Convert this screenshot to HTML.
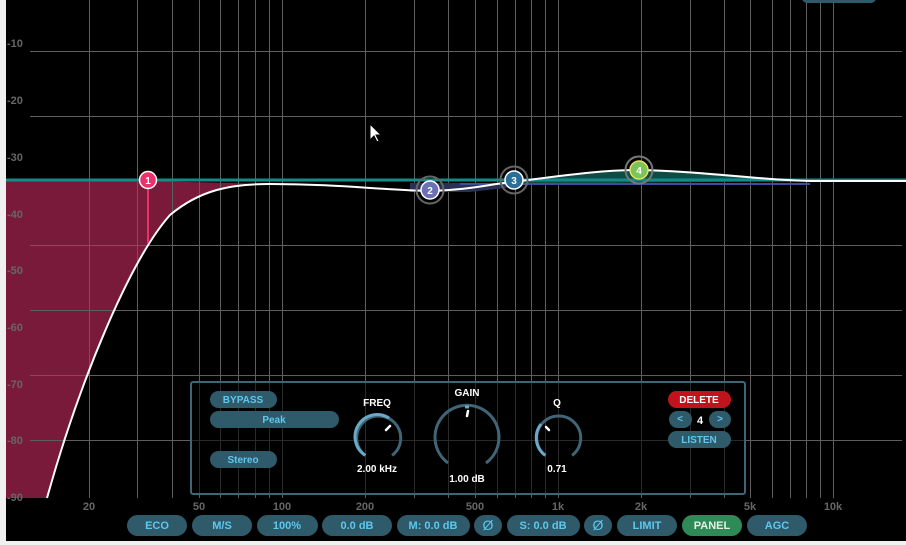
<!DOCTYPE html>
<html><head><style>
body{margin:0;width:906px;height:545px;background:#f0f0f0;overflow:hidden;font-family:"Liberation Sans",sans-serif}
svg{position:absolute;left:0;top:0}
</style></head><body>
<svg width="906" height="545" viewBox="0 0 906 545" font-family="Liberation Sans, sans-serif">
<rect x="6" y="0" width="900" height="541" fill="#000"/>
<path d="M6,181 L148,181 L270,184 C230,184 200,190 170,215 C130,260 80,380 47,498 L6,498 Z" fill="#7a1a3a"/>
<g stroke="#5e5e5e" stroke-width="1">
<line x1="89.5" y1="0" x2="89.5" y2="498"/><line x1="137.5" y1="0" x2="137.5" y2="498"/><line x1="172.5" y1="0" x2="172.5" y2="498"/><line x1="199.5" y1="0" x2="199.5" y2="498"/><line x1="220.5" y1="0" x2="220.5" y2="498"/><line x1="238.5" y1="0" x2="238.5" y2="498"/><line x1="255.5" y1="0" x2="255.5" y2="498"/><line x1="269.5" y1="0" x2="269.5" y2="498"/><line x1="282.5" y1="0" x2="282.5" y2="498"/>
<line x1="365.5" y1="0" x2="365.5" y2="498"/><line x1="414.5" y1="0" x2="414.5" y2="498"/><line x1="448.5" y1="0" x2="448.5" y2="498"/><line x1="475.5" y1="0" x2="475.5" y2="498"/><line x1="497.5" y1="0" x2="497.5" y2="498"/><line x1="515.5" y1="0" x2="515.5" y2="498"/><line x1="531.5" y1="0" x2="531.5" y2="498"/><line x1="545.5" y1="0" x2="545.5" y2="498"/><line x1="558.5" y1="0" x2="558.5" y2="498"/>
<line x1="641.5" y1="0" x2="641.5" y2="498"/><line x1="690.5" y1="0" x2="690.5" y2="498"/><line x1="724.5" y1="0" x2="724.5" y2="498"/><line x1="750.5" y1="0" x2="750.5" y2="498"/><line x1="772.5" y1="0" x2="772.5" y2="498"/><line x1="790.5" y1="0" x2="790.5" y2="498"/><line x1="806.5" y1="0" x2="806.5" y2="498"/><line x1="820.5" y1="0" x2="820.5" y2="498"/><line x1="833.5" y1="0" x2="833.5" y2="498"/>
</g>
<g stroke="#5e5e5e" stroke-width="1">
<line x1="30" y1="51.5" x2="902" y2="51.5"/><line x1="30" y1="116.5" x2="902" y2="116.5"/><line x1="30" y1="245.5" x2="902" y2="245.5"/><line x1="30" y1="310.5" x2="902" y2="310.5"/><line x1="30" y1="375.5" x2="902" y2="375.5"/><line x1="30" y1="440.5" x2="902" y2="440.5"/>
</g>
<g fill="#666" font-size="11" font-weight="bold">
<text x="7" y="47">-10</text><text x="7" y="104">-20</text><text x="7" y="161">-30</text><text x="7" y="218">-40</text><text x="7" y="274">-50</text><text x="7" y="331">-60</text><text x="7" y="388">-70</text><text x="7" y="444">-80</text><text x="7" y="501">-90</text>
</g>
<g fill="#666" font-size="11" font-weight="bold" text-anchor="middle">
<text x="89" y="510">20</text><text x="199" y="510">50</text><text x="282" y="510">100</text><text x="365" y="510">200</text><text x="475" y="510">500</text><text x="558" y="510">1k</text><text x="641" y="510">2k</text><text x="750" y="510">5k</text><text x="833" y="510">10k</text>
</g>
<path d="M410,183 L513,183 L513,187 L470,192 L410,192 Z" fill="#2a2f55"/>
<path d="M513,180 C560,176 600,170 638,169 C700,170 760,178 810,181 L513,184 Z" fill="#0e4c44"/>
<line x1="6" y1="180" x2="906" y2="180" stroke="#148c86" stroke-width="3"/>
<line x1="460" y1="184" x2="810" y2="184" stroke="#3a4f9a" stroke-width="2"/>
<path d="M47,498 C80,380 130,260 170,215 C200,190 230,184 270,184 C340,184 380,190 430,191 C470,190 490,184 513,182 C560,176 600,170 638,170 C700,171 760,180 810,181 L906,181" fill="none" stroke="#fff" stroke-width="2"/>
<line x1="148" y1="188" x2="148" y2="243" stroke="#e8336b" stroke-width="2"/>
<circle cx="430" cy="190" r="13.5" fill="none" stroke="#666" stroke-width="2"/>
<circle cx="430" cy="190" r="9" fill="#6b70b8" stroke="#fff" stroke-width="1.5"/>
<text x="430" y="194" fill="#fff" font-size="10" font-weight="bold" text-anchor="middle">2</text>
<circle cx="514" cy="180" r="13.5" fill="none" stroke="#666" stroke-width="2"/>
<circle cx="514" cy="180" r="9" fill="#2a6f9a" stroke="#fff" stroke-width="1.5"/>
<text x="514" y="184" fill="#fff" font-size="10" font-weight="bold" text-anchor="middle">3</text>
<circle cx="639" cy="170" r="13.5" fill="none" stroke="#777" stroke-width="2"/>
<circle cx="639" cy="170" r="9" fill="#7cc35a" stroke="#e8e060" stroke-width="1.5"/>
<text x="639" y="174" fill="#fff" font-size="10" font-weight="bold" text-anchor="middle">4</text>
<circle cx="148" cy="180" r="8.5" fill="#e8336b" stroke="#fff" stroke-width="1.5"/>
<text x="148" y="184" fill="#fff" font-size="10" font-weight="bold" text-anchor="middle">1</text>
<path d="M370,124 L370,140 L374,136 L377,142 L379,141 L376,135 L381,135 Z" fill="#fff" stroke="#000" stroke-width="1"/>
<rect x="802" y="-8" width="74" height="11" rx="5" fill="#2f5a6a"/>
<rect x="191" y="382" width="554" height="112" rx="2" fill="rgba(0,0,0,0.55)" stroke="#3f6577" stroke-width="2"/>
<g font-size="10" font-weight="bold" text-anchor="middle">
<rect x="210" y="391" width="67" height="17" rx="8.5" fill="#2f5a6a"/><text x="243" y="403" fill="#5bc8f0">BYPASS</text>
<rect x="210" y="411" width="129" height="17" rx="8.5" fill="#2f5a6a"/><text x="274" y="423" fill="#5bc8f0">Peak</text>
<rect x="210" y="451" width="67" height="17" rx="8.5" fill="#2f5a6a"/><text x="243" y="463" fill="#5bc8f0">Stereo</text>
<text x="377" y="406" fill="#fff">FREQ</text><text x="467" y="396" fill="#fff">GAIN</text><text x="557" y="406" fill="#fff">Q</text>
<text x="377" y="472" fill="#fff">2.00 kHz</text><text x="467" y="482" fill="#fff">1.00 dB</text><text x="557" y="472" fill="#fff">0.71</text>
<rect x="668" y="391" width="63" height="17" rx="8.5" fill="#c0141c"/><text x="699" y="403" fill="#fff">DELETE</text>
<rect x="669" y="411" width="23" height="17" rx="8.5" fill="#2f5a6a"/><text x="680" y="422" fill="#5bc8f0">&lt;</text>
<text x="700" y="424" fill="#fff" font-size="11">4</text>
<rect x="709" y="411" width="22" height="17" rx="8.5" fill="#2f5a6a"/><text x="720" y="422" fill="#5bc8f0">&gt;</text>
<rect x="668" y="431" width="63" height="17" rx="8.5" fill="#2f5a6a"/><text x="699" y="443" fill="#5bc8f0">LISTEN</text>
</g>
<g fill="none" stroke-width="3">
<path d="M365.3,455.4 A22,22 0 1 1 392.1,455.4" stroke="#3f6577"/>
<path d="M365.3,455.4 A22,22 0 0 1 389,418" stroke="#6aa8c8"/>
<path d="M448,463 A32,32 0 1 1 486,463" stroke="#3f6577"/>
<path d="M465,407 A32,32 0 0 1 469,407" stroke="#6aa8c8"/>
<path d="M545.3,455.4 A22,22 0 1 1 572.1,455.4" stroke="#3f6577"/>
<path d="M545.3,455.4 A22,22 0 0 1 541,424" stroke="#6aa8c8"/>
</g>
<g stroke="#fff" stroke-width="2.5" stroke-linecap="round">
<line x1="386" y1="430" x2="390" y2="426"/>
<line x1="467" y1="416" x2="468" y2="411"/>
<line x1="546" y1="427" x2="549" y2="430"/>
</g>
<g font-size="11" font-weight="bold" text-anchor="middle" fill="#5bc8f0">
<rect x="127" y="515" width="60" height="21" rx="10.5" fill="#2f5a6a"/><text x="157" y="529">ECO</text>
<rect x="192" y="515" width="60" height="21" rx="10.5" fill="#2f5a6a"/><text x="222" y="529">M/S</text>
<rect x="257" y="515" width="61" height="21" rx="10.5" fill="#2f5a6a"/><text x="287" y="529">100%</text>
<rect x="322" y="515" width="70" height="21" rx="10.5" fill="#2f5a6a"/><text x="357" y="529">0.0 dB</text>
<rect x="397" y="515" width="73" height="21" rx="10.5" fill="#2f5a6a"/><text x="433" y="529">M: 0.0 dB</text>
<rect x="474" y="515" width="28" height="21" rx="10.5" fill="#2f5a6a"/><text x="488" y="530" font-size="14" font-weight="normal">Ø</text>
<rect x="507" y="515" width="73" height="21" rx="10.5" fill="#2f5a6a"/><text x="543" y="529">S: 0.0 dB</text>
<rect x="584" y="515" width="28" height="21" rx="10.5" fill="#2f5a6a"/><text x="598" y="530" font-size="14" font-weight="normal">Ø</text>
<rect x="617" y="515" width="60" height="21" rx="10.5" fill="#2f5a6a"/><text x="647" y="529">LIMIT</text>
<rect x="682" y="515" width="60" height="21" rx="10.5" fill="#2e8b57"/><text x="712" y="529" fill="#e6f0e6">PANEL</text>
<rect x="747" y="515" width="60" height="21" rx="10.5" fill="#2f5a6a"/><text x="777" y="529">AGC</text>
</g>
</svg>
</body></html>
